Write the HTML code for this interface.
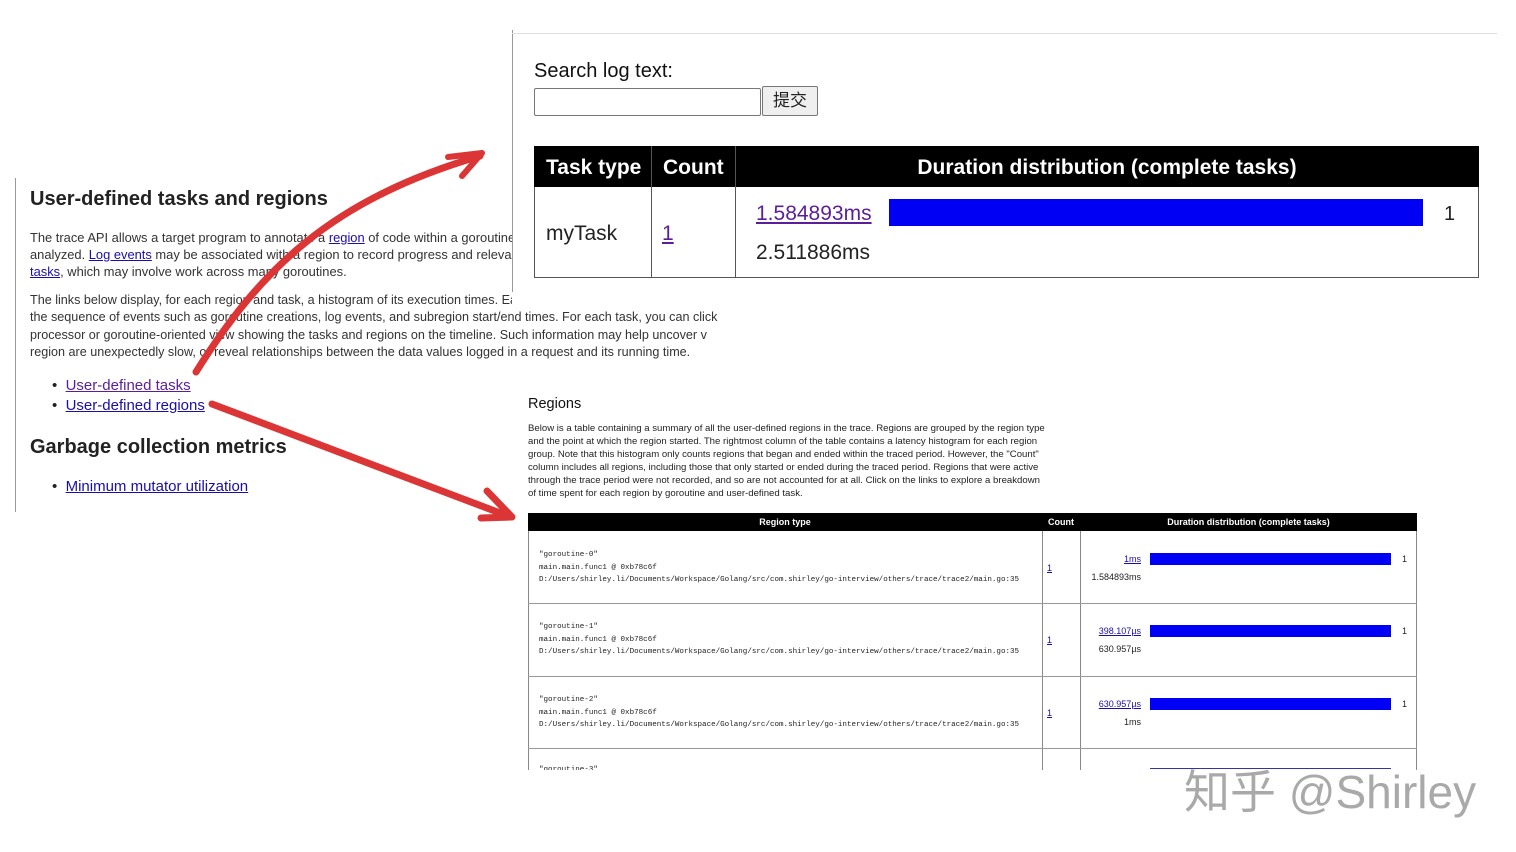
<!DOCTYPE html>
<html><head><meta charset="utf-8"><style>
*{margin:0;padding:0;box-sizing:border-box}
body{width:1516px;height:852px;background:#fff;position:relative;overflow:hidden;font-family:"Liberation Sans","Noto Sans CJK SC",sans-serif;color:#222}
.a{position:absolute;white-space:nowrap}
a,.l{color:#1a0dab;text-decoration:underline}
.v{color:#5a1e9a}
.mono{font-family:"Liberation Mono",monospace;font-size:7.55px;line-height:12.6px;color:#222}
.bar{position:absolute;background:#0000f5}
</style></head><body>
<!-- left panel -->
<div class="a" style="left:15px;top:178px;width:1px;height:334px;background:#999"></div>
<div class="a" style="left:30px;top:188px;font-size:20px;font-weight:bold;color:#222">User-defined tasks and regions</div>
<div class="a" style="left:30px;top:229px;font-size:12.9px;line-height:17px;color:#333">The trace API allows a target program to annotate a <span class="l">region</span> of code within a goroutine to be<br>analyzed. <span class="l">Log events</span> may be associated with a region to record progress and relevant values.<br><span class="l">tasks</span>, which may involve work across many goroutines.</div>
<div class="a" style="left:30px;top:292px;font-size:12.6px;line-height:17.3px;color:#333">The links below display, for each region and task, a histogram of its execution times. Each<br>the sequence of events such as goroutine creations, log events, and subregion start/end times. For each task, you can click<br>processor or goroutine-oriented view showing the tasks and regions on the timeline. Such information may help uncover v<br>region are unexpectedly slow, or reveal relationships between the data values logged in a request and its running time.</div>
<div class="a" style="left:52px;top:376px;font-size:15px;line-height:20px">•&nbsp; <span class="l v">User-defined tasks</span><br>•&nbsp; <span class="l">User-defined regions</span></div>
<div class="a" style="left:30px;top:436px;font-size:20px;font-weight:bold;color:#222">Garbage collection metrics</div>
<div class="a" style="left:52px;top:478px;font-size:15px">•&nbsp; <span class="l">Minimum mutator utilization</span></div>
<!-- top right panel -->
<div class="a" style="left:512px;top:30px;width:1004px;height:278px;background:#fff"></div>
<div class="a" style="left:512px;top:30px;width:1px;height:262px;background:#999"></div>
<div class="a" style="left:512px;top:33px;width:985px;height:1px;background:#ddd"></div>
<div class="a" style="left:534px;top:60px;font-size:20px;color:#111">Search log text:</div>
<div class="a" style="left:534px;top:88px;width:227px;height:28px;border:1px solid #777;border-radius:2px"></div>
<div class="a" style="left:762px;top:86px;width:56px;height:30px;border:1px solid #777;background:#efefef;border-radius:2px;font-size:17px;text-align:center;line-height:28px">提交</div>
<div class="a" style="left:534px;top:146px;width:945px;height:132px;border:1px solid #555"></div>
<div class="a" style="left:534px;top:146px;width:945px;height:41px;background:#000"></div>
<div class="a" style="left:651px;top:146px;width:1px;height:132px;background:#555"></div>
<div class="a" style="left:735px;top:146px;width:1px;height:132px;background:#555"></div>
<div class="a" style="left:546px;top:156px;font-size:21px;font-weight:bold;color:#fff">Task type</div>
<div class="a" style="left:663px;top:156px;font-size:21px;font-weight:bold;color:#fff">Count</div>
<div class="a" style="left:735px;top:156px;width:744px;text-align:center;font-size:21px;font-weight:bold;color:#fff">Duration distribution (complete tasks)</div>
<div class="a" style="left:546px;top:222px;font-size:21px">myTask</div>
<div class="a l v" style="left:662px;top:222px;font-size:21px">1</div>
<div class="a l v" style="left:756px;top:202px;font-size:21px">1.584893ms</div>
<div class="a" style="left:756px;top:241px;font-size:21px">2.511886ms</div>
<div class="bar" style="left:889px;top:199px;width:534px;height:27px"></div>
<div class="a" style="left:1444px;top:203px;font-size:20px">1</div>
<!-- regions -->
<div class="a" style="left:528px;top:396px;font-size:14.5px;color:#111">Regions</div>
<div class="a" style="left:528px;top:423px;font-size:9.6px;line-height:12.9px;color:#222">Below is a table containing a summary of all the user-defined regions in the trace. Regions are grouped by the region type<br>and the point at which the region started. The rightmost column of the table contains a latency histogram for each region<br>group. Note that this histogram only counts regions that began and ended within the traced period. However, the "Count"<br>column includes all regions, including those that only started or ended during the traced period. Regions that were active<br>through the trace period were not recorded, and so are not accounted for at all. Click on the links to explore a breakdown<br>of time spent for each region by goroutine and user-defined task.</div>
<div class="a" style="left:528px;top:513px;width:889px;height:18px;background:#000;color:#fff;font-size:9px;font-weight:bold;line-height:19px">
<span class="a" style="left:0;width:514px;text-align:center">Region type</span><span class="a" style="left:514px;width:38px;text-align:center">Count</span><span class="a" style="left:552px;width:337px;text-align:center">Duration distribution (complete tasks)</span></div>
<div class="a" style="left:528px;top:531px;width:1px;height:239px;background:#888"></div>
<div class="a" style="left:1042px;top:531px;width:1px;height:239px;background:#888"></div>
<div class="a" style="left:1080px;top:531px;width:1px;height:239px;background:#888"></div>
<div class="a" style="left:1416px;top:531px;width:1px;height:239px;background:#888"></div>
<div class="a" style="left:528px;top:603px;width:889px;height:1px;background:#999"></div>
<div class="a" style="left:528px;top:676px;width:889px;height:1px;background:#999"></div>
<div class="a" style="left:528px;top:748px;width:889px;height:1px;background:#999"></div>

<div class="a mono" style="left:539px;top:549px">"goroutine-0"<br>main.main.func1 @ 0xb78c6f<br>D:/Users/shirley.li/Documents/Workspace/Golang/src/com.shirley/go-interview/others/trace/trace2/main.go:35</div>
<div class="a l" style="left:1047px;top:563px;font-size:9px">1</div>
<div class="a l" style="left:1080px;top:554px;width:61px;text-align:right;font-size:9px">1ms</div>
<div class="a" style="left:1080px;top:572px;width:61px;text-align:right;font-size:9px">1.584893ms</div>
<div class="bar" style="left:1150px;top:553px;width:241px;height:12px"></div>
<div class="a" style="left:1402px;top:554px;font-size:9px">1</div>

<div class="a mono" style="left:539px;top:621px">"goroutine-1"<br>main.main.func1 @ 0xb78c6f<br>D:/Users/shirley.li/Documents/Workspace/Golang/src/com.shirley/go-interview/others/trace/trace2/main.go:35</div>
<div class="a l" style="left:1047px;top:635px;font-size:9px">1</div>
<div class="a l" style="left:1080px;top:626px;width:61px;text-align:right;font-size:9px">398.107µs</div>
<div class="a" style="left:1080px;top:644px;width:61px;text-align:right;font-size:9px">630.957µs</div>
<div class="bar" style="left:1150px;top:625px;width:241px;height:12px"></div>
<div class="a" style="left:1402px;top:626px;font-size:9px">1</div>

<div class="a mono" style="left:539px;top:694px">"goroutine-2"<br>main.main.func1 @ 0xb78c6f<br>D:/Users/shirley.li/Documents/Workspace/Golang/src/com.shirley/go-interview/others/trace/trace2/main.go:35</div>
<div class="a l" style="left:1047px;top:708px;font-size:9px">1</div>
<div class="a l" style="left:1080px;top:699px;width:61px;text-align:right;font-size:9px">630.957µs</div>
<div class="a" style="left:1080px;top:717px;width:61px;text-align:right;font-size:9px">1ms</div>
<div class="bar" style="left:1150px;top:698px;width:241px;height:12px"></div>
<div class="a" style="left:1402px;top:699px;font-size:9px">1</div>
<div class="a mono" style="left:539px;top:764px;height:6px;overflow:hidden">"goroutine-3"</div>
<div class="a" style="left:1150px;top:768px;width:241px;height:1px;background:#3333aa"></div>
<!-- watermark -->
<div class="a" style="left:1184px;top:756px;font-size:46px;color:rgba(140,140,140,0.75);font-family:'Liberation Sans','Noto Sans CJK SC',sans-serif">知乎 @Shirley</div>
<!-- arrows -->
<svg class="a" style="left:0;top:0" width="1516" height="852">
<g fill="none" stroke="#dc3535" stroke-linecap="round" stroke-linejoin="round">
<path d="M196 372 C260 270 330 200 480 156" stroke-width="7"/>
<path d="M448 157 L482 153 L462 176" stroke-width="6"/>
<path d="M212 404 L508 516" stroke-width="7"/>
<path d="M487 491 L512 517 L481 518" stroke-width="7"/>
</g></svg>
</body></html>
